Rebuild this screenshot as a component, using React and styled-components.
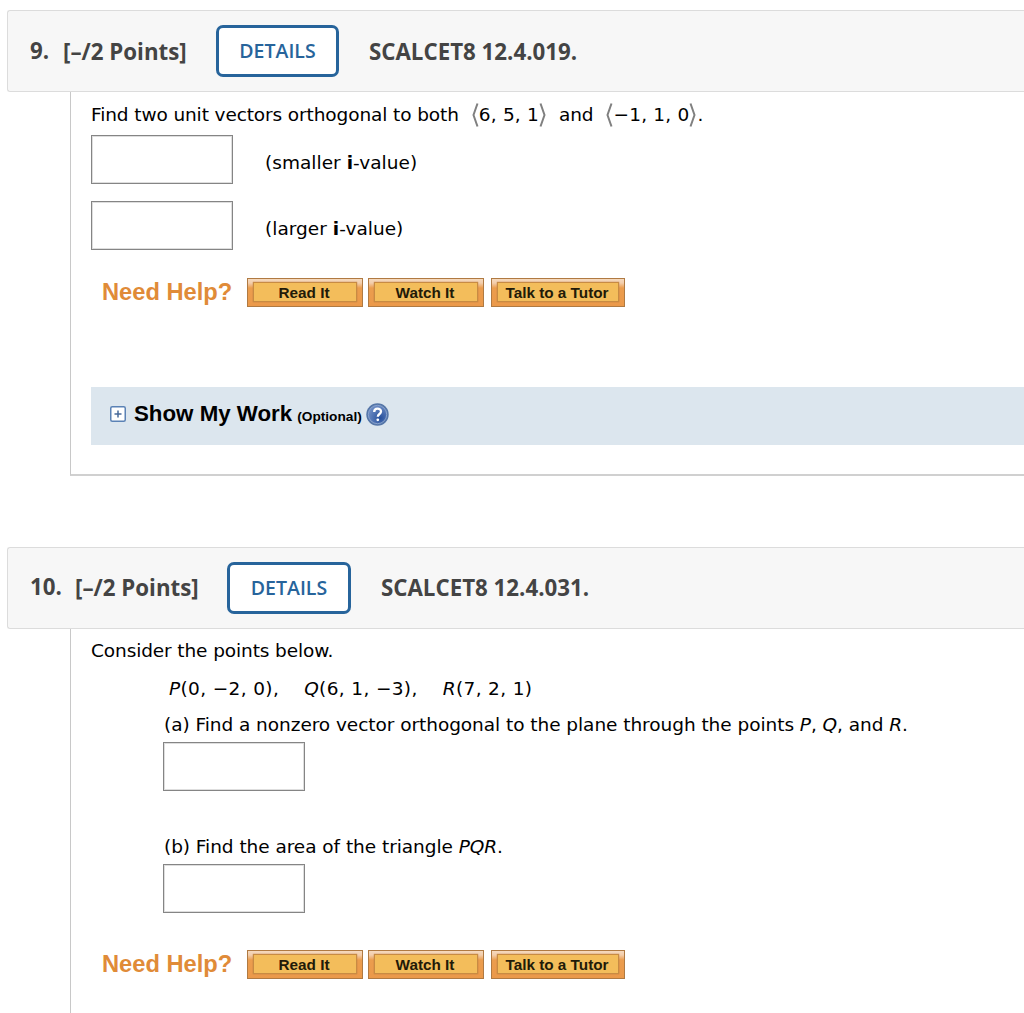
import styled, { createGlobalStyle } from "styled-components";

const GlobalStyle = createGlobalStyle`
  * {
    box-sizing: border-box;
  }

  body {
    margin: 0;
    background-color: #fff;
    color: #000;
    font-family: "DejaVu Sans", Verdana, sans-serif;
    font-size: 18.5px;
    letter-spacing: -0.11px;
    overflow: hidden;
  }
`;

const Page = styled.main`
  width: 1024px;
  height: 1013px;
  padding: 10px 0 0 7px;
  overflow: hidden;
`;

const Question = styled.section`
  margin-bottom: 71px;
`;

const Header = styled.header`
  display: flex;
  align-items: center;
  height: 82px;
  padding-left: 22px;
  background-color: #f7f7f7;
  border: 1px solid #dcdcdc;
  border-right: 0;
  border-radius: 3px 0 0 3px;
  color: #444;
  font-family: "Open Sans", sans-serif;
  font-size: 22.3px;
  font-weight: 700;
  letter-spacing: 0;
  white-space: nowrap;
`;

const Number = styled.span`
  width: ${({ $width }) => $width}px;
  padding-bottom: ${({ $lift }) => 2 + ($lift || 0)}px;
`;

const HeaderText = styled.span`
  width: ${({ $width }) => ($width ? `${$width}px` : "auto")};
  padding-bottom: ${({ $lift }) => $lift || 0}px;
`;

const DetailsButton = styled.button`
  width: ${({ $width }) => $width}px;
  height: 52px;
  margin-right: 30px;
  padding: 0 0 1px;
  background-color: #fff;
  border: 3px solid #27649b;
  border-radius: 7px;
  color: #27649b;
  font-family: "Open Sans", sans-serif;
  font-size: 19.5px;
  font-weight: 600;
`;

const Body = styled.div`
  margin-left: 63px;
  padding-left: 20px;
  border-left: 1px solid #c8c8c8;
  ${({ $open }) => ($open ? "padding-bottom: 60px;" : "border-bottom: 2px solid #d0d0d0;")}
`;

const Line = styled.p`
  height: ${({ $height }) => $height}px;
  margin: 0;
  line-height: ${({ $leading }) => $leading}px;
  white-space: nowrap;
`;

const VectorLine = styled.div`
  display: flex;
  align-items: center;
  height: 43px;
  padding-top: 2px;
  white-space: nowrap;
`;

const Vector = styled.span`
  display: flex;
  align-items: center;
  margin-left: 12px;
  margin-right: ${({ $after }) => $after || 0}px;
  letter-spacing: 0.2px;
`;

const AnswerRow = styled.div`
  display: flex;
  align-items: center;
  gap: 32px;
  margin-bottom: 17px;
`;

const Answer = styled.input`
  display: block;
  width: 142px;
  height: 49px;
  margin: 0;
  border: 1px solid #858585;
  box-shadow: inset 0 0 0 1px #dedede;
  background-color: #fff;
`;

const AnswerLabel = styled.label`
  padding-top: 5px;
  letter-spacing: 0.03px;
`;

const Points = styled.div`
  display: flex;
  gap: 25px;
  height: 35px;
  margin-left: 78px;
  line-height: 36px;
  letter-spacing: 0.36px;
`;

const Part = styled.div`
  margin-left: 72px;
  margin-bottom: 37px;
  letter-spacing: -0.05px;

  ${Line} {
    padding-left: 1px;
  }
`;

const Help = styled.div`
  display: flex;
  align-items: center;
  height: 29px;
  padding-left: 11px;
  font-family: "Liberation Sans", Arial, sans-serif;
  font-weight: 700;
  letter-spacing: 0;
`;

const HelpTitle = styled.span`
  width: 145px;
  color: #e08b38;
  font-size: 23.7px;
  white-space: nowrap;
`;

const HelpButton = styled.button`
  width: ${({ $wide }) => ($wide ? 134 : 116)}px;
  height: 29px;
  margin-right: ${({ $gap }) => $gap || 0}px;
  padding: 3px 5px 4px;
  background: linear-gradient(#f5d9bd 0, #f3ceac 4px, #eb9d4e 9px, #eb994a 100%);
  border: 1px solid #b07a42;
  font-family: inherit;
  font-size: 15.3px;
  font-weight: 700;
  color: #221a08;
`;

const HelpFace = styled.span`
  display: block;
  height: 20px;
  padding-right: 2px;
  background-color: #f3bd5b;
  border: 1px solid #c88b43;
  box-shadow: 0 0 1px #a9713a;
  line-height: 20px;
  white-space: nowrap;
`;

const FirstHelp = styled.div`
  padding-top: 11px;
`;

const Work = styled.div`
  display: flex;
  align-items: center;
  height: 58px;
  margin: 80px 0 29px;
  padding: 0 0 4px 19px;
  background-color: #dce6ee;
  font-family: "Liberation Sans", Arial, sans-serif;
  font-weight: 700;
  letter-spacing: 0;
`;

const WorkTitle = styled.span`
  margin: 0 5px 0 8px;
  font-size: 22.3px;
`;

const Optional = styled.span`
  margin: 5px 4px 0 0;
  font-size: 13.7px;
`;

const Bracket = ({ right }) => (
  <svg width="8" height="24" viewBox="0 0 8 24" fill="none" stroke="#808080" strokeWidth="2">
    <path d={right ? "M1.5 0.5L5.5 12L1.5 23.5" : "M6.5 0.5L2.5 12L6.5 23.5"} />
  </svg>
);

const PlusIcon = () => (
  <svg width="16" height="16" viewBox="0 0 16 16">
    <rect x="0.75" y="0.75" width="14.5" height="14.5" rx="1.5" fill="#fff" stroke="#5b82b5" strokeWidth="1.5" />
    <path d="M4.5 8h7M8 4.5v7" stroke="#47699a" strokeWidth="1.5" />
  </svg>
);

const HelpIcon = () => (
  <svg width="23" height="23" viewBox="0 0 23 23">
    <defs>
      <radialGradient id="ball" cx="0.65" cy="0.7" r="0.7">
        <stop offset="0" stopColor="#27509c" />
        <stop offset="1" stopColor="#6d8cc4" />
      </radialGradient>
    </defs>
    <circle cx="11.5" cy="11.5" r="11.2" fill="#5576a8" />
    <circle cx="11.5" cy="11.5" r="9.2" fill="url(#ball)" stroke="#8ca6cf" strokeWidth="0.9" />
    <path d="M8.2 9c0-4.5 6.8-4.2 6.8-.5 0 2.5-3.2 2.5-3.2 5.2" fill="none" stroke="#fff" strokeWidth="2.3" />
    <circle cx="11.8" cy="16.8" r="1.4" fill="#fff" />
  </svg>
);

const NeedHelp = () => (
  <Help>
    <HelpTitle>Need Help?</HelpTitle>
    <HelpButton $gap={5}>
      <HelpFace>Read It</HelpFace>
    </HelpButton>
    <HelpButton $gap={7}>
      <HelpFace>Watch It</HelpFace>
    </HelpButton>
    <HelpButton $wide>
      <HelpFace>Talk to a Tutor</HelpFace>
    </HelpButton>
  </Help>
);

const App = () => {
  return (
    <Page>
      <GlobalStyle />
      <Question>
        <Header>
          <Number $width={33}>9.</Number>
          <HeaderText $width={153}>[–/2 Points]</HeaderText>
          <DetailsButton $width={123}>DETAILS</DetailsButton>
          <HeaderText>SCALCET8 12.4.019.</HeaderText>
        </Header>
        <Body>
          <VectorLine>
            Find two unit vectors orthogonal to both
            <Vector $after={12}>
              <Bracket />
              6, 5, 1
              <Bracket right />
            </Vector>
            and
            <Vector>
              <Bracket />
              −1, 1, 0
              <Bracket right />
            </Vector>
            .
          </VectorLine>
          <AnswerRow>
            <Answer />
            <AnswerLabel>
              (smaller <b>i</b>-value)
            </AnswerLabel>
          </AnswerRow>
          <AnswerRow>
            <Answer />
            <AnswerLabel>
              (larger <b>i</b>-value)
            </AnswerLabel>
          </AnswerRow>
          <FirstHelp>
            <NeedHelp />
          </FirstHelp>
          <Work>
            <PlusIcon />
            <WorkTitle>Show My Work</WorkTitle>
            <Optional>(Optional)</Optional>
            <HelpIcon />
          </Work>
        </Body>
      </Question>

      <Question>
        <Header>
          <Number $width={45} $lift={2}>10.</Number>
          <HeaderText $width={152} $lift={2}>[–/2 Points]</HeaderText>
          <DetailsButton $width={124}>DETAILS</DetailsButton>
          <HeaderText $lift={2}>SCALCET8 12.4.031.</HeaderText>
        </Header>
        <Body $open>
          <Line $height={42} $leading={44}>Consider the points below.</Line>
          <Points>
            <span><i>P</i>(0, −2, 0),</span>
            <span><i>Q</i>(6, 1, −3),</span>
            <span><i>R</i>(7, 2, 1)</span>
          </Points>
          <Part>
            <Line $height={36} $leading={38}>
              (a) Find a nonzero vector orthogonal to the plane through the points <i>P</i>, <i>Q</i>, and <i>R</i>.
            </Line>
            <Answer />
          </Part>
          <Part>
            <Line $height={36} $leading={38}>
              (b) Find the area of the triangle <i>PQR</i>.
            </Line>
            <Answer />
          </Part>
          <NeedHelp />
        </Body>
      </Question>
    </Page>
  );
};

export default App;
